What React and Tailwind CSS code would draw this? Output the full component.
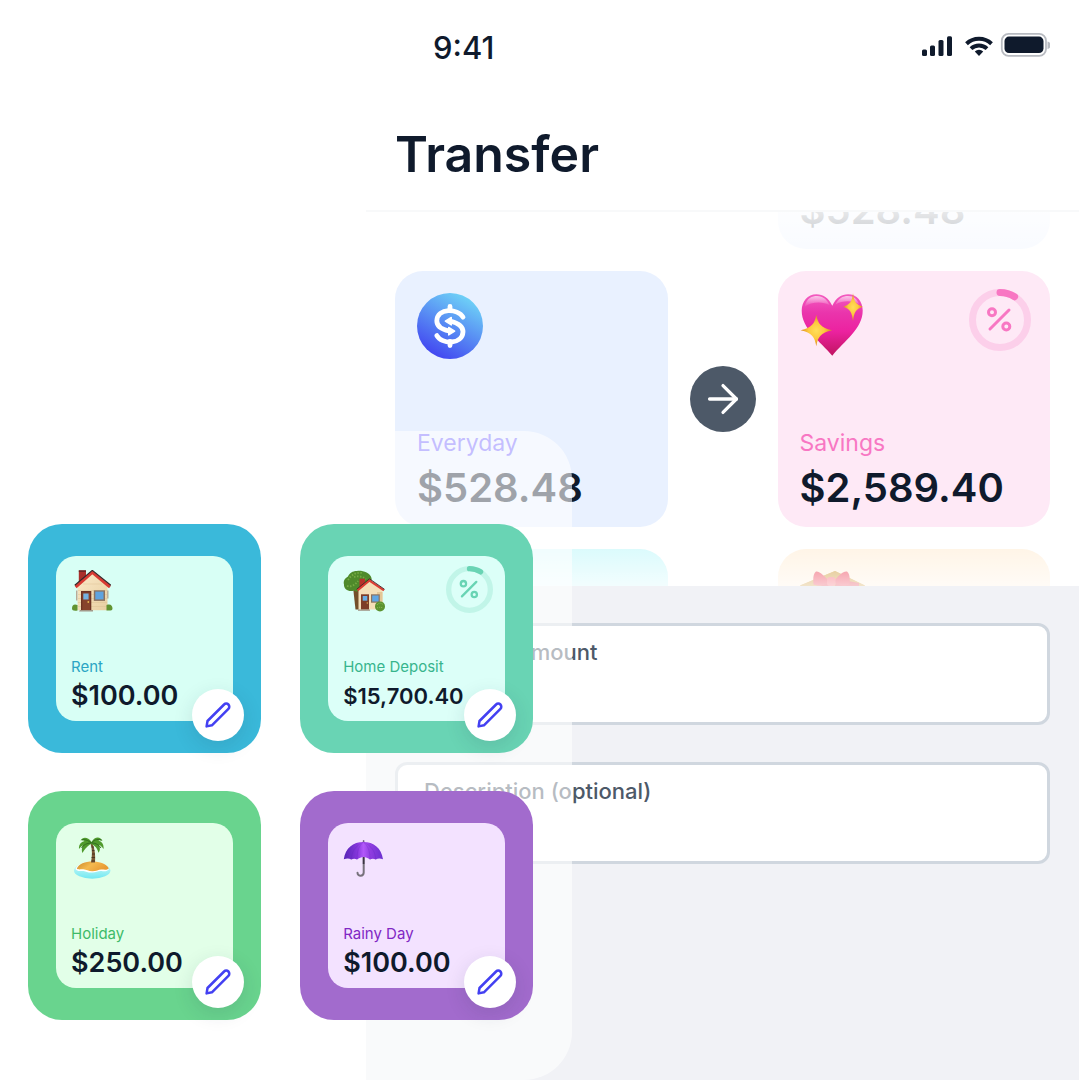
import { ArrowRight } from "lucide-react";

function StatusIcons() {
  return (
    <svg width="129" height="26" viewBox="0 0 129 26" fill="#0f1a2c" role="img" aria-label="Signal, Wi-Fi and battery">
      <rect x="1" y="17.5" width="5" height="6.5" rx="1.5" />
      <rect x="9" y="13.5" width="5" height="10.5" rx="1.5" />
      <rect x="17.5" y="8" width="5" height="16" rx="1.5" />
      <rect x="26" y="4.2" width="5" height="19.8" rx="1.5" />
      <g fill="none" stroke="#0f1a2c" strokeWidth="4">
        <path d="M45.5 11.7a18.2 18.2 0 0 1 25 0" />
        <path d="M50 16.6a11.8 11.8 0 0 1 16 0" />
      </g>
      <path d="M58 23.9l-4.200-4.400a6 6 0 0 1 8.400 0z" />
      <rect x="80.8" y="1.9" width="44.2" height="22" rx="6.8" fill="none" stroke="#b8bbc1" strokeWidth="1.8" />
      <rect x="83.5" y="4.6" width="39" height="16.5" rx="4.5" />
      <path d="M126.500 9.500c4.400 1 4.400 6.500 0 7.500z" fill="#b8bbc1" />
    </svg>
  );
}

function DollarIcon() {
  return (
    <svg viewBox="0 0 66 66" className="size-[66px]" aria-hidden="true">
      <defs>
        <linearGradient id="coin" x1=".2" y1="1" x2=".75" y2="0">
          <stop offset="0" stopColor="#3f3df0" />
          <stop offset="1" stopColor="#70d8f7" />
        </linearGradient>
      </defs>
      <circle cx="33" cy="33" r="33" fill="url(#coin)" />
      <g fill="none" stroke="#fff" strokeWidth="4.8" strokeLinecap="round" strokeLinejoin="round">
        <path d="M46 24.2C41 15.2 20.4 14.5 19.8 27.8C19.8 33.6 25.5 36.6 32 38" />
        <path d="M19.8 42.6C24.8 51.5 45.4 52 46 38.8C46 33 40.3 30 34 28.3" />
        <path d="M33 13.5v4M33 48.5v4" />
      </g>
      <path d="M28.300 28.200l6-3.800v7.600zM37.700 38.200l-6-3.800v7.600z" fill="#fff" stroke="#fff" strokeWidth="1.4" strokeLinejoin="round" />
    </svg>
  );
}

function HeartIcon() {
  return (
    <svg viewBox="0 0 64 64" className="size-16" aria-hidden="true">
      <defs>
        <linearGradient id="heart" x1="0" y1="0" x2="0" y2="1">
          <stop offset="0" stopColor="#f45cc0" />
          <stop offset=".3" stopColor="#ea35ac" />
          <stop offset=".6" stopColor="#ec22a0" />
          <stop offset="1" stopColor="#c01460" />
        </linearGradient>
        <linearGradient id="gloss" x1="0" y1="0" x2="0" y2="1">
          <stop offset="0" stopColor="#fff" stopOpacity=".65" />
          <stop offset="1" stopColor="#fff" stopOpacity="0" />
        </linearGradient>
        <radialGradient id="star">
          <stop offset="0" stopColor="#ffdf5a" />
          <stop offset=".5" stopColor="#fdc93f" />
          <stop offset="1" stopColor="#d98a1c" />
        </radialGradient>
      </defs>
      <path d="M32.3 12.8C28.5 4.5 23 1.2 16.5 1.2C7.5 1.2 1.7 8.5 1.7 17.5C1.7 36 20 48 32.3 62.8C44 48 62.7 36 62.7 17.5C62.7 8.5 57 1.2 48 1.2C41.5 1.2 36 4.5 32.3 12.8Z" fill="url(#heart)" />
      <path d="M4.5 14C7 4.5 12 3 17 3c6 0 10 3.5 12.5 9C23 8.5 11 8.5 4.5 14zM35.5 11.5C38 5.5 43 3 48 3c6 0 9 3 11 8-7-4-17-3.5-23.5.5z" fill="url(#gloss)" />
      <path d="M16.3 21.8c1.7 9 4.3 12.8 15.7 15.5-11.4 2.7-14 6.5-15.7 16C14.6 43.8 12 40 .6 37.3 12 34.6 14.6 30.8 16.3 21.8z" fill="url(#star)" />
      <path d="M53 .3c1.1 8 2.7 11.2 9.7 13.4C55.7 16 54.1 19 53 28.3 51.9 19 50.3 16 43.3 13.7 50.3 11.5 51.9 8.3 53 .3z" fill="url(#star)" />
    </svg>
  );
}

function HouseIcon() {
  return (
    <svg viewBox="0 0 42 42" className="size-[42px]" aria-hidden="true">
      <defs>
        <linearGradient id="wall" x1="0" y1="0" x2="1" y2="1">
          <stop offset="0" stopColor="#fbe9c8" />
          <stop offset="1" stopColor="#e8cfa2" />
        </linearGradient>
      </defs>
      <rect x="7.8" y=".4" width="7.2" height="12" fill="#a92f2b" />
      <rect x="7.8" y=".4" width="7.2" height="1.4" fill="#5c2424" />
      <path d="M6.5 16L21.3 3l15.2 13v24.3h-30z" fill="url(#wall)" />
      <path d="M7 20.5h29M7 24.5h29M7 28.5h29M7 32.5h29M7 36.5h29M12 14h19" stroke="#d9bd8d" strokeWidth=".4" />
      <path d="M4.6 17L21.3 2.4 39 17" fill="none" stroke="#d83a33" strokeWidth="3" />
      <path d="M3.8 15.3L21.3.4 39.8 15.3" fill="none" stroke="#33282a" strokeWidth="1.2" />
      <rect x="10" y="21" width="10.3" height="19" fill="#6d3424" />
      <rect x="11.3" y="22.5" width="7.7" height="17.5" fill="#87432c" />
      <rect x="12.3" y="23.5" width="5.3" height="6" fill="#75b3e2" />
      <circle cx="17.3" cy="32" r=".9" fill="#e5b652" />
      <rect x="22.8" y="20.3" width="11.2" height="10.6" fill="#8a7260" />
      <rect x="24.3" y="21.6" width="8.2" height="7.8" fill="#5fa3df" />
      <path d="M5.7 20.5v10M36.8 20.5v8" stroke="#b8ab98" strokeWidth="1.4" />
      <path d="M9 40h13v1.6H8z" fill="#a29889" />
      <path d="M1 38.5c0-4 2.5-4.8 5.5-3.5v5.5C3 41 1 40.5 1 38.5zM35.5 35c4-1.5 6 .5 6 3.5 0 2-2 2.3-6 2z" fill="#629331" />
    </svg>
  );
}

function TreeHouseIcon() {
  return (
    <svg viewBox="0 0 42 42" className="size-[42px]" aria-hidden="true">
      <path d="M10 17l2.5 22.5h4L16 17z" fill="#744f29" />
      <path d="M14 1C19 .2 27 2.5 28.5 8c1 5-3 9-8 9-1 4-7 5.5-9.5 3.5C6 22.5.5 19 1 14.5 0 11 2 8 5 6.5 6.5 3 10 .8 14 1z" fill="#4f8a2b" />
      <path d="M5 10c3-5 8-8 14-7M4 16c5 1 8-1 11-5M11 7c4-1 8-1 12 2" fill="none" stroke="#76ab43" strokeWidth="1.8" strokeDasharray="1.5 1.5" />
      <rect x="16.5" y="8.7" width="5.5" height="9" fill="#b6322c" />
      <path d="M15.5 19.5L26.5 11l13 9v19.6h-24z" fill="#f4dfb8" />
      <path d="M34 22h5.5v17.6H34z" fill="#e3c797" />
      <path d="M14.5 20.3l12-9.8 14.5 9.8" fill="none" stroke="#dc3d34" strokeWidth="2.2" />
      <path d="M13.6 19.3L26.5 8.8 41.5 19.3" fill="none" stroke="#45272a" strokeWidth=".9" />
      <rect x="18" y="24.3" width="8" height="15.3" fill="#7d3d28" />
      <rect x="19.7" y="26" width="4.6" height="4.7" fill="#68aee5" />
      <circle cx="24.3" cy="33" r=".7" fill="#e5b652" />
      <rect x="28" y="24.3" width="8.8" height="8.4" fill="#8a7260" />
      <rect x="29.2" y="25.5" width="6.4" height="6" fill="#5fa6e4" />
      <path d="M15 39.5h12v1.3H15z" fill="#a29889" />
      <circle cx="37" cy="36.4" r="5" fill="#5c9330" />
      <path d="M34 35c1-2 4-2.5 6-.5M34 38c2-1 4-1 6 0" fill="none" stroke="#8ebb55" strokeWidth="1" strokeDasharray="1 1" />
    </svg>
  );
}

function IslandIcon() {
  return (
    <svg viewBox="0 0 42 42" className="size-[42px]" aria-hidden="true">
      <defs>
        <linearGradient id="sea" x1="0" y1="0" x2="0" y2="1">
          <stop offset="0" stopColor="#d9fbf6" />
          <stop offset="1" stopColor="#71e8f2" />
        </linearGradient>
        <linearGradient id="sand" x1="0" y1="0" x2="1" y2=".4">
          <stop offset="0" stopColor="#c98729" />
          <stop offset=".5" stopColor="#f4b94f" />
          <stop offset="1" stopColor="#e89a33" />
        </linearGradient>
      </defs>
      <ellipse cx="21.2" cy="33.5" rx="18.2" ry="8.2" fill="url(#sea)" />
      <path d="M4.5 32c2 3 5 1.5 8 2s5 2 9 1.5 6-2 9-1.5 6 .5 7.5-2c-2-5-9-7.5-16.8-7.5S6.5 27 4.5 32z" fill="#fff" />
      <path d="M5.8 31.5c2-4.5 8-7 15.5-7s14.5 2.3 16.5 7c-2 1.8-4.5 1-7.5 1s-5 1.8-9 1.8-6-1.8-9-2-5 .7-6.5-.8z" fill="url(#sand)" />
      <path d="M19.5 6.5c2 6 1.7 13 .5 19h4c.5-7 0-13-2.5-19z" fill="#7a5836" />
      <path d="M20.5 10h2.5M21 13.5h2.5M21 17h3M20.5 20.5h3.5M20.5 24h3.5" stroke="#3f2c1c" strokeWidth=".8" />
      <path d="M20.5 5C17 0 12-.5 9.5 3.5 12 2.8 13 3.5 13.5 4 9.5 5 7.5 8 8 12c1.5-2 2.5-3 4-3.5-1.5 3-1.5 5.5-.5 7.5 1.5-3 4-6 8-9 3 .5 6.5 3 8 8.7 2-3 1.5-5.200.5-7.700 2 .5 3 2 4.500 4 .7-4.500-1.500-7.500-5-8.300 1.200-.7 2.200-.5 4 .3C29.500-.5 24-1 20.500 5z" fill="#4f9a2c" />
      <path d="M11 2.8C15 2 18 4 20.5 6c2-2.5 5-4.5 10-3M20 6c-4 0-8 2-9.5 5M21 6c4 0 7 2 9 5" fill="none" stroke="#2f681d" strokeWidth=".9" />
    </svg>
  );
}

function UmbrellaIcon() {
  return (
    <svg viewBox="0 0 42 42" className="size-[42px]" aria-hidden="true">
      <defs>
        <linearGradient id="canopy" x1="0" y1="0" x2="1" y2="0">
          <stop offset="0" stopColor="#5524b5" />
          <stop offset=".35" stopColor="#8637dc" />
          <stop offset=".5" stopColor="#b358fa" />
          <stop offset=".68" stopColor="#8f3de0" />
          <stop offset="1" stopColor="#6a30cf" />
        </linearGradient>
      </defs>
      <path d="M20.7 20v15.5c0 4.2-6.2 4.2-6.2.2" fill="none" stroke="#77727c" strokeWidth="2" strokeLinecap="round" />
      <path d="M20.6 20v7" stroke="#3b3342" strokeWidth="1.6" />
      <path d="M20.6 3.8v2" stroke="#796a82" strokeWidth="1.6" strokeLinecap="round" />
      <path d="M.8 22.3C2.5 11 10 5 20.4 5S38.3 11 40 22.3c-3-1-5-1-7.3.3-2-1.2-3.7-1.3-5.7 0-2-1.6-4.5-2.6-6.5-2.6s-4.5 1-6.5 2.6c-2-1.3-3.7-1.2-5.7 0-2.3-1.3-4.5-1.3-7.5-.3z" fill="url(#canopy)" />
      <path d="M20.4 5C15.5 9 14 15 14 22.5M20.4 5c5 4 6.6 10 6.6 17.5M20.4 5C12 9 8.5 15 8.3 22.5M20.4 5c8.5 4 12 10 12.3 17.5" fill="none" stroke="#5a1fb0" strokeOpacity=".35" strokeWidth=".6" />
    </svg>
  );
}

function GiftIcon() {
  return (
    <svg viewBox="0 0 66 66" className="size-[66px]" aria-hidden="true">
      <path d="M0 14.5L35 0l30 14.5v40L32 66 0 54z" fill="#e0b75c" />
      <path d="M0 14.5L35 0l30 14.5L32 26z" fill="#d3a44e" />
      <path d="M27 12L5 21v6l26-10zM37 8l22 4v7L34 18z" fill="#e4505f" />
      <path d="M30 11C25 6 20 0 16 .5c-3 2-3 8-2.5 13C19 16 25 14 30 11zM33 11C38 6 42 0 47 .5c3 2 3 8 2.5 13C44 16 38 14 33 11z" fill="#ee5467" />
      <rect x="27" y="6" width="8.5" height="9" rx="3" fill="#f7707d" />
    </svg>
  );
}

function InterestBadge({ className }) {
  return (
    <svg viewBox="0 0 62 62" fill="none" stroke="currentColor" className={className} role="img" aria-label="Earns interest">
      <circle cx="31" cy="31" r="27.5" strokeWidth="7" strokeOpacity=".23" />
      <path d="M31 3.5a27.5 27.5 0 0 1 14.600 4.200" strokeWidth="7" strokeLinecap="round" />
      <g strokeWidth="3" strokeLinecap="round">
        <path d="M21 40L40 21" />
        <circle cx="23" cy="23.3" r="3.5" />
        <circle cx="37.3" cy="37.5" r="3.5" />
      </g>
    </svg>
  );
}

function AccountCard({ name, amount, icon, card, label, badge }) {
  return (
    <article className={`relative flex h-64 shrink-0 flex-col justify-between rounded-[28px] px-[22px] pt-[22px] pb-[15px] ${card}`}>
      {icon}
      {badge && <InterestBadge className={`absolute top-[18px] right-[19px] size-[62px] ${badge}`} />}
      <div>
        <p className={`mb-2 text-[23px] leading-[26px] ${label}`}>{name}</p>
        <p className="text-[40px] leading-[48px] font-semibold whitespace-nowrap">{amount}</p>
      </div>
    </article>
  );
}

function Field({ id, label }) {
  return (
    <div className="rounded-xl border-3 border-[#d0d7df] bg-white px-[26px] py-3">
      <label htmlFor={id} className="block text-[22px] leading-7 font-medium text-[#4d5968]">{label}</label>
      <input id={id} type="text" className="block h-11 w-full bg-transparent text-2xl outline-none" />
    </div>
  );
}

function SavingTile({ name, amount, icon, tile, card, label, money, badge }) {
  return (
    <article className={`relative rounded-[34px] px-7 py-8 ${tile}`}>
      <div className={`relative flex h-[165px] flex-col justify-between rounded-[20px] px-[15px] pt-3.5 pb-[9px] ${card}`}>
        {icon}
        {badge && <InterestBadge className={`absolute top-2.5 right-3 size-[47px] ${badge}`} />}
        <div>
          <p className={`mb-[3px] text-[15px] leading-5 whitespace-nowrap ${label}`}>{name}</p>
          <p className={`leading-8 font-semibold whitespace-nowrap ${money}`}>{amount}</p>
        </div>
      </div>
      <button
        type="button"
        aria-label={`Edit ${name}`}
        className="absolute right-[17px] bottom-3 flex size-[52px] items-center justify-center rounded-full bg-white shadow-[0_6px_20px_rgba(30,50,70,0.13)]"
      >
        <svg viewBox="0 0 28 28" className="size-7" fill="none" stroke="#4340f2" strokeWidth="2.5" strokeLinejoin="round" aria-hidden="true">
          <path d="M2.600 25.400l.9-5.400L20.100 3.500a3 3 0 0 1 4.300 4.300L7.900 24.300z" />
        </svg>
      </button>
    </article>
  );
}

export default function App() {
  return (
    <main className="relative flex min-h-screen flex-col overflow-hidden bg-white font-['Inter',sans-serif] text-[#0f1a2c]">
      <section className="mr-px ml-[366px] flex flex-1 flex-col">
        <header className="border-b-2 border-[#f8f9fa] px-[29px] pt-8 pb-6">
          <div className="flex items-start justify-between pl-[38px]">
            <time className="text-[31px] leading-8 font-medium">9:41</time>
            <StatusIcons />
          </div>
          <h1 className="mt-[58px] text-[50px] leading-16 font-semibold">Transfer</h1>
        </header>

        <div className="relative grid h-[374px] grid-cols-[1fr_66px_1fr] grid-rows-1 gap-[22px] overflow-hidden px-[29px]">
          <div className="flex flex-col justify-center gap-[22px]">
            <div className="h-64 shrink-0" />
            <AccountCard name="Everyday" amount="$528.48" icon={<DollarIcon />} card="bg-[#e9f1ff]" label="text-[#6b5cff]" />
            <div className="h-64 shrink-0 rounded-[28px] bg-[#d5fafc]" />
          </div>
          <div className="flex items-center justify-center">
            <button type="button" aria-label="Transfer direction" className="flex size-[66px] items-center justify-center rounded-full bg-[#4d5968] text-white">
              <ArrowRight size={46} strokeWidth={1.700} />
            </button>
          </div>
          <div className="flex flex-col justify-center gap-[22px]">
            <AccountCard name="Everyday" amount="$528.48" icon={<DollarIcon />} card="bg-[#e9f1ff]" label="text-[#6b5cff]" />
            <AccountCard name="Savings" amount="$2,589.40" icon={<HeartIcon />} card="bg-[#fee9f6]" label="text-[#f877c3]" badge="text-[#f877c3]" />
            <div className="h-64 shrink-0 rounded-[28px] bg-[#fff3e3] p-[22px]">
              <GiftIcon />
            </div>
          </div>
          <div className="pointer-events-none absolute inset-x-0 top-0 h-[59px] bg-linear-to-b from-white/90 to-white/60" />
          <div className="pointer-events-none absolute inset-x-0 bottom-0 h-[37px] bg-linear-to-b from-white/15 to-white/70" />
        </div>

        <form className="flex flex-1 flex-col gap-[37px] bg-[#f1f2f6] px-[29px] py-[37px]">
          <Field id="amount" label="Transfer amount" />
          <Field id="description" label="Description (optional)" />
        </form>
      </section>

      <section className="absolute top-[431px] bottom-0 left-0 w-[53%] rounded-r-[48px] bg-white/60 pt-[93px] pr-[39px] pl-7">
        <div className="grid grid-cols-2 gap-x-[39px] gap-y-[38px]">
          <SavingTile name="Rent" amount="$100.00" icon={<HouseIcon />} tile="bg-[#3ab9da]" card="bg-[#d8fff5]" label="text-[#2ba5c4]" money="text-[27px]" />
          <SavingTile name="Home Deposit" amount="$15,700.40" icon={<TreeHouseIcon />} tile="bg-[#69d4b4]" card="bg-[#dcfff8]" label="text-[#37b58d]" money="text-[22px]" badge="text-[#69d4b4]" />
          <SavingTile name="Holiday" amount="$250.00" icon={<IslandIcon />} tile="bg-[#69d48e]" card="bg-[#e2ffe8]" label="text-[#3dbb68]" money="text-[27px]" />
          <SavingTile name="Rainy Day" amount="$100.00" icon={<UmbrellaIcon />} tile="bg-[#a26bcd]" card="bg-[#f3e2ff]" label="text-[#8127c4]" money="text-[27px]" />
        </div>
      </section>
    </main>
  );
}
